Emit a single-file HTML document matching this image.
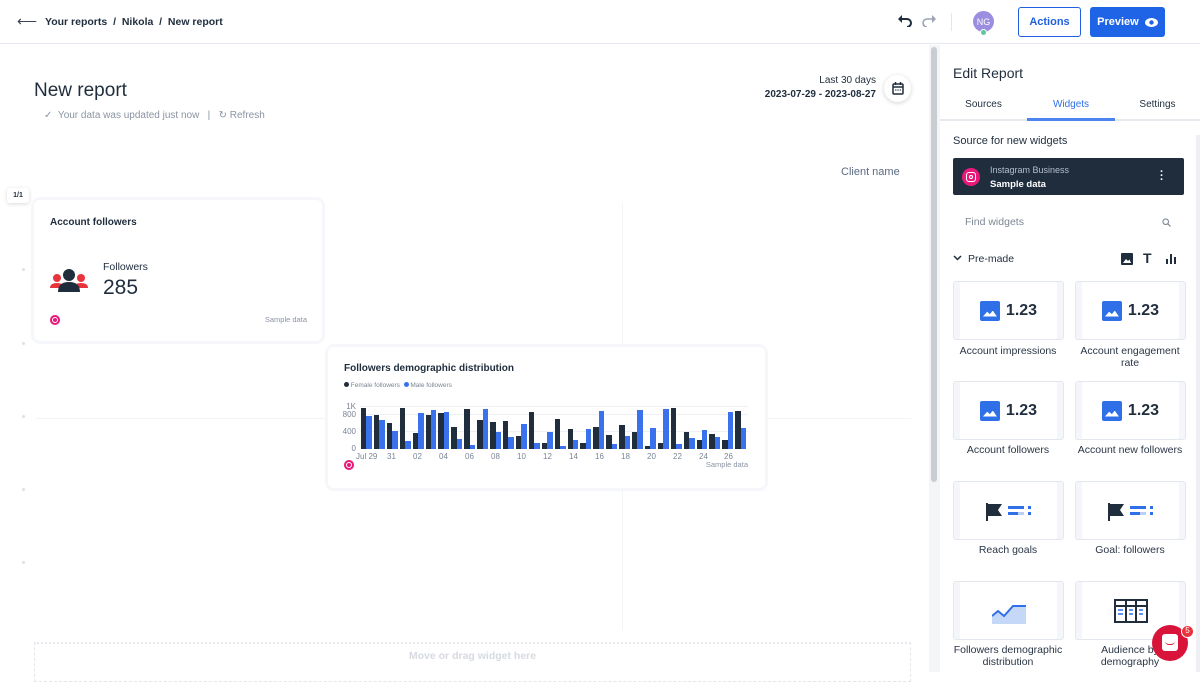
<!DOCTYPE html>
<html><head><meta charset="utf-8"><style>
*{box-sizing:border-box;margin:0;padding:0}
body{width:1200px;height:672px;overflow:hidden;font-family:"Liberation Sans",sans-serif;color:#1f2d3d;background:#fff;position:relative}
.abs{position:absolute}
.hdr{left:0;top:0;width:1200px;height:44px;border-bottom:1px solid #e6e9ef;background:#fff}
.crumb{left:45px;top:16px;font-size:10.5px;font-weight:bold;color:#1f2d3d}
.btn{top:7px;height:30px;border-radius:3px;font-size:11px;font-weight:bold;display:flex;align-items:center;justify-content:center}
.card{background:#fff;border-radius:6px;box-shadow:0 0 0 3px #f6f7fa,0 1px 4px rgba(0,0,0,.05)}
.tile{position:absolute;width:111px;height:59px;border:1px solid #e3e7ee;border-radius:3px;background:#fff;box-shadow:inset 6px 0 0 #f4f6fa,inset -6px 0 0 #f4f6fa}
.lbl{position:absolute;width:122px;text-align:center;font-size:10.5px;color:#2a3646;line-height:12px}
.num{display:flex;align-items:center;justify-content:center;height:100%;gap:6px;font-weight:bold;font-size:16px;color:#1f2d3d}
.ic{width:20px;height:20px;background:#2f6fe8;border-radius:2px;position:relative;overflow:hidden}
.ic:after{content:"";position:absolute;left:3px;bottom:4px;width:14px;height:6px;background:#fff;clip-path:polygon(0 100%,30% 20%,50% 60%,70% 0,100% 100%)}
.bars{left:361px;top:406px;width:387px;height:43px;display:flex;align-items:flex-end}
.g{flex:1;display:flex;align-items:flex-end;gap:0;height:100%;padding-right:2px}
.g i{display:block;flex:1}
.f{background:#1f2d3d}.m{background:#3a72ee}
.ax{font-size:8px;color:#7a8594}
</style></head><body>
<div class="abs hdr"></div>
<div class="abs" style="left:17px;top:13px;font-size:14px;color:#3a4656">⟵</div>
<div class="abs crumb">Your reports &nbsp;/ &nbsp;Nikola &nbsp;/ &nbsp;New report</div>
<svg class="abs" style="left:898px;top:15px" width="14" height="12" viewBox="0 0 14 12"><path d="M2 4h7a4 4 0 0 1 0 8" fill="none" stroke="#1f2d3d" stroke-width="2"/><path d="M0 4l4-4v8z" fill="#1f2d3d"/></svg>
<svg class="abs" style="left:922px;top:15px" width="14" height="12" viewBox="0 0 14 12"><path d="M12 4H5a4 4 0 0 0 0 8" fill="none" stroke="#9aa3af" stroke-width="1.6"/><path d="M14 4l-4-4v8z" fill="#9aa3af"/></svg>
<div class="abs" style="left:951px;top:13px;width:1px;height:18px;background:#e3e6eb"></div>
<div class="abs" style="left:973px;top:11px;width:21px;height:21px;border-radius:50%;background:#9b8ee0;color:#fff;font-size:9px;display:flex;align-items:center;justify-content:center">NG</div>
<div class="abs" style="left:980px;top:29px;width:7px;height:7px;border-radius:50%;background:#5fc79a;border:1px solid #fff"></div>
<div class="abs btn" style="left:1018px;width:63px;border:1.5px solid #1f5fe0;color:#1f5fe0">Actions</div>
<div class="abs btn" style="left:1090px;width:75px;background:#1f63e6;color:#fff">Preview&nbsp;&nbsp;<svg width="13" height="9" viewBox="0 0 13 9"><ellipse cx="6.5" cy="4.5" rx="6.5" ry="4.5" fill="#fff"/><circle cx="6.5" cy="4.5" r="2.2" fill="#1f63e6"/></svg></div>

<div class="abs" style="left:34px;top:80px;font-size:19px;color:#1f2d3d">New report</div>
<div class="abs" style="left:44px;top:110px;font-size:10px;color:#8a94a3">✓ &nbsp;Your data was updated just now &nbsp;&nbsp;| &nbsp;&nbsp;↻ Refresh</div>
<div class="abs" style="left:760px;top:75px;width:116px;text-align:right;font-size:10px;color:#1f2d3d">Last 30 days</div>
<div class="abs" style="left:740px;top:89px;width:136px;text-align:right;font-size:10px;font-weight:bold;color:#1f2d3d">2023-07-29 - 2023-08-27</div>
<div class="abs" style="left:884px;top:75px;width:27px;height:27px;border-radius:50%;background:#fff;box-shadow:0 1px 5px rgba(0,0,0,.18)"></div>
<svg class="abs" style="left:892px;top:82px" width="12" height="13" viewBox="0 0 12 13"><rect x="1" y="2" width="10" height="10" rx="1" fill="none" stroke="#1f2d3d" stroke-width="1.5"/><path d="M1 5h10M3.5 0v3M8.5 0v3" stroke="#1f2d3d" stroke-width="1.5"/><path d="M3 8h1.5M5.3 8h1.5M7.6 8h1.5" stroke="#1f2d3d"/></svg>
<div class="abs" style="left:841px;top:166px;font-size:11px;color:#5a6a82">Client name</div>
<div class="abs" style="left:622px;top:203px;width:1px;height:427px;background:#f3f4f7"></div>
<div class="abs" style="left:36px;top:418px;width:875px;height:1px;background:#f3f4f7"></div>
<div class="abs" style="left:7px;top:188px;width:22px;height:15px;background:#fff;border-radius:3px;box-shadow:0 1px 4px rgba(0,0,0,.15);font-size:7px;font-weight:bold;text-align:center;line-height:15px">1/1</div>
<div class="abs" style="left:22px;top:268px;width:3px;height:3px;border-radius:50%;background:#dde1e7"></div>
<div class="abs" style="left:22px;top:342px;width:3px;height:3px;border-radius:50%;background:#dde1e7"></div>
<div class="abs" style="left:22px;top:415px;width:3px;height:3px;border-radius:50%;background:#dde1e7"></div>
<div class="abs" style="left:22px;top:488px;width:3px;height:3px;border-radius:50%;background:#dde1e7"></div>
<div class="abs" style="left:22px;top:561px;width:3px;height:3px;border-radius:50%;background:#dde1e7"></div>

<div class="abs card" style="left:34px;top:200px;width:288px;height:141px"></div>
<div class="abs" style="left:50px;top:217px;font-size:10px;font-weight:bold">Account followers</div>
<svg class="abs" style="left:50px;top:268px" width="38" height="24" viewBox="0 0 38 24"><circle cx="7" cy="10" r="4" fill="#e8343c"/><circle cx="31" cy="10" r="4" fill="#e8343c"/><path d="M0 20q0-5 7-5t7 5zM24 20q0-5 7-5t7 5z" fill="#e8343c"/><circle cx="19" cy="7" r="6" fill="#1f2d3d"/><path d="M8 24q0-10 11-10t11 10z" fill="#1f2d3d"/></svg>
<div class="abs" style="left:103px;top:261px;font-size:10.5px">Followers</div>
<div class="abs" style="left:103px;top:276px;font-size:21px">285</div>
<div class="abs" style="left:50px;top:315px;width:10px;height:10px;border-radius:50%;background:#e8197a;box-shadow:inset 0 0 0 2px #e8197a,inset 0 0 0 3px #fff"></div>
<div class="abs" style="left:260px;top:315px;font-size:7.5px;color:#8a94a3;width:47px;text-align:right">Sample data</div>

<div class="abs card" style="left:328px;top:347px;width:437px;height:141px"></div>
<div class="abs" style="left:344px;top:363px;font-size:10px;font-weight:bold">Followers demographic distribution</div>
<div class="abs" style="left:344px;top:382px;font-size:6.5px;color:#7a8594"><span style="display:inline-block;width:5px;height:5px;border-radius:50%;background:#1f2d3d"></span> Female followers &nbsp;<span style="display:inline-block;width:5px;height:5px;border-radius:50%;background:#3a72ee"></span> Male followers</div>
<div class="abs ax" style="left:340px;top:402px;width:16px;text-align:right">1K</div>
<div class="abs ax" style="left:340px;top:410px;width:16px;text-align:right">800</div>
<div class="abs ax" style="left:340px;top:427px;width:16px;text-align:right">400</div>
<div class="abs ax" style="left:340px;top:444px;width:16px;text-align:right">0</div>
<div class="abs" style="left:360px;top:406px;width:388px;height:1px;background:#eef0f3"></div>
<div class="abs" style="left:360px;top:414px;width:388px;height:1px;background:#eef0f3"></div>
<div class="abs" style="left:360px;top:431px;width:388px;height:1px;background:#eef0f3"></div>
<div class="abs bars">
<div class="g"><i class="f" style="height:95%"></i><i class="m" style="height:76%"></i></div>
<div class="g"><i class="f" style="height:80%"></i><i class="m" style="height:68%"></i></div>
<div class="g"><i class="f" style="height:60%"></i><i class="m" style="height:43%"></i></div>
<div class="g"><i class="f" style="height:95%"></i><i class="m" style="height:18%"></i></div>
<div class="g"><i class="f" style="height:38%"></i><i class="m" style="height:83%"></i></div>
<div class="g"><i class="f" style="height:79%"></i><i class="m" style="height:90%"></i></div>
<div class="g"><i class="f" style="height:83%"></i><i class="m" style="height:86%"></i></div>
<div class="g"><i class="f" style="height:51%"></i><i class="m" style="height:23%"></i></div>
<div class="g"><i class="f" style="height:94%"></i><i class="m" style="height:10%"></i></div>
<div class="g"><i class="f" style="height:68%"></i><i class="m" style="height:92%"></i></div>
<div class="g"><i class="f" style="height:62%"></i><i class="m" style="height:40%"></i></div>
<div class="g"><i class="f" style="height:64%"></i><i class="m" style="height:27%"></i></div>
<div class="g"><i class="f" style="height:30%"></i><i class="m" style="height:59%"></i></div>
<div class="g"><i class="f" style="height:85%"></i><i class="m" style="height:14%"></i></div>
<div class="g"><i class="f" style="height:14%"></i><i class="m" style="height:40%"></i></div>
<div class="g"><i class="f" style="height:70%"></i><i class="m" style="height:8%"></i></div>
<div class="g"><i class="f" style="height:47%"></i><i class="m" style="height:21%"></i></div>
<div class="g"><i class="f" style="height:14%"></i><i class="m" style="height:46%"></i></div>
<div class="g"><i class="f" style="height:51%"></i><i class="m" style="height:88%"></i></div>
<div class="g"><i class="f" style="height:32%"></i><i class="m" style="height:11%"></i></div>
<div class="g"><i class="f" style="height:56%"></i><i class="m" style="height:30%"></i></div>
<div class="g"><i class="f" style="height:40%"></i><i class="m" style="height:90%"></i></div>
<div class="g"><i class="f" style="height:8%"></i><i class="m" style="height:50%"></i></div>
<div class="g"><i class="f" style="height:13%"></i><i class="m" style="height:92%"></i></div>
<div class="g"><i class="f" style="height:95%"></i><i class="m" style="height:11%"></i></div>
<div class="g"><i class="f" style="height:40%"></i><i class="m" style="height:26%"></i></div>
<div class="g"><i class="f" style="height:21%"></i><i class="m" style="height:44%"></i></div>
<div class="g"><i class="f" style="height:34%"></i><i class="m" style="height:28%"></i></div>
<div class="g"><i class="f" style="height:21%"></i><i class="m" style="height:87%"></i></div>
<div class="g"><i class="f" style="height:88%"></i><i class="m" style="height:48%"></i></div>
</div>
<div class="abs ax" style="left:356px;top:452px">Jul 29</div>
<div class="abs ax" style="left:387px;top:452px">31</div>
<div class="abs ax" style="left:413px;top:452px">02</div>
<div class="abs ax" style="left:439px;top:452px">04</div>
<div class="abs ax" style="left:465px;top:452px">06</div>
<div class="abs ax" style="left:491px;top:452px">08</div>
<div class="abs ax" style="left:517px;top:452px">10</div>
<div class="abs ax" style="left:543px;top:452px">12</div>
<div class="abs ax" style="left:569px;top:452px">14</div>
<div class="abs ax" style="left:595px;top:452px">16</div>
<div class="abs ax" style="left:621px;top:452px">18</div>
<div class="abs ax" style="left:647px;top:452px">20</div>
<div class="abs ax" style="left:673px;top:452px">22</div>
<div class="abs ax" style="left:699px;top:452px">24</div>
<div class="abs ax" style="left:724px;top:452px">26</div>
<div class="abs" style="left:344px;top:460px;width:10px;height:10px;border-radius:50%;background:#e8197a;box-shadow:inset 0 0 0 2px #e8197a,inset 0 0 0 3px #fff"></div>
<div class="abs" style="left:700px;top:460px;font-size:7.5px;color:#8a94a3;width:48px;text-align:right">Sample data</div>

<div class="abs" style="left:34px;top:642px;width:877px;height:40px;border:1px dashed #e3e6eb;border-top:2px dotted #e6e8ed"></div>
<div class="abs" style="left:34px;top:650px;width:877px;text-align:center;font-size:10.5px;font-weight:bold;color:#d6dae0">Move or drag widget here</div>

<div class="abs" style="left:929px;top:45px;width:11px;height:627px;background:#f4f5f7"></div>
<div class="abs" style="left:931px;top:47px;width:6px;height:435px;border-radius:3px;background:#c9cdd3"></div>

<div class="abs" style="left:953px;top:65px;font-size:14px;color:#1f2d3d">Edit Report</div>
<div class="abs" style="left:940px;top:99px;width:87px;text-align:center;font-size:10px;color:#1f2d3d">Sources</div>
<div class="abs" style="left:1027px;top:99px;width:88px;text-align:center;font-size:10px;color:#2f6fe8">Widgets</div>
<div class="abs" style="left:1115px;top:99px;width:85px;text-align:center;font-size:10px;color:#1f2d3d">Settings</div>
<div class="abs" style="left:940px;top:119px;width:260px;height:2px;background:#e6e9ee"></div>
<div class="abs" style="left:1027px;top:118px;width:88px;height:3px;background:#4d83ee"></div>
<div class="abs" style="left:1196px;top:135px;width:4px;height:537px;background:#eef0f3"></div>
<div class="abs" style="left:953px;top:135px;font-size:11px;color:#1f2d3d">Source for new widgets</div>
<div class="abs" style="left:953px;top:158px;width:231px;height:37px;background:#1f2d3d;border-radius:2px"></div>
<div class="abs" style="left:962px;top:168px;width:18px;height:18px;border-radius:50%;background:#e8197a"></div>
<div class="abs" style="left:966px;top:172px;width:10px;height:10px;border:1.3px solid #fff;border-radius:3px"></div>
<div class="abs" style="left:969px;top:175px;width:4px;height:4px;border:1.2px solid #fff;border-radius:50%"></div>
<div class="abs" style="left:990px;top:165px;font-size:9px;color:#b6bfcc">Instagram Business</div>
<div class="abs" style="left:990px;top:179px;font-size:9.5px;color:#fff;font-weight:bold">Sample data</div>
<div class="abs" style="left:1160px;top:170px;color:#fff;font-size:11px;font-weight:bold;line-height:4px">·<br>·<br>·</div>
<div class="abs" style="left:965px;top:216px;font-size:10.5px;color:#7d8795">Find widgets</div>
<svg class="abs" style="left:1162px;top:218px" width="9" height="9" viewBox="0 0 9 9"><circle cx="3.7" cy="3.7" r="2.8" fill="none" stroke="#7d8795" stroke-width="1.1"/><path d="M5.8 5.8L8.5 8.5" stroke="#7d8795" stroke-width="1.2"/></svg>
<svg class="abs" style="left:953px;top:255px" width="9" height="6" viewBox="0 0 9 6"><path d="M1 1l3.5 3.5L8 1" fill="none" stroke="#1f2d3d" stroke-width="1.5"/></svg>
<div class="abs" style="left:968px;top:253px;font-size:10.5px;color:#1f2d3d">Pre-made</div>
<svg class="abs" style="left:1121px;top:253px" width="12" height="12" viewBox="0 0 12 12"><rect width="12" height="12" rx="1" fill="#1f2d3d"/><path d="M2 10l3-4 2 2 1.5-1.5L10 10z" fill="#fff"/></svg>
<div class="abs" style="left:1143px;top:250px;font-size:14px;font-weight:bold">T</div>
<svg class="abs" style="left:1166px;top:253px" width="11" height="11" viewBox="0 0 11 11"><path d="M1 11V6M5 11V1M9 11V4" stroke="#1f2d3d" stroke-width="2"/></svg>

<div class="tile" style="left:953px;top:281px"><div class="num"><div class="ic"></div>1.23</div></div>
<div class="tile" style="left:1075px;top:281px"><div class="num"><div class="ic"></div>1.23</div></div>
<div class="lbl" style="left:947px;top:345px">Account impressions</div>
<div class="lbl" style="left:1075px;top:345px;width:110px">Account engagement rate</div>
<div class="tile" style="left:953px;top:381px"><div class="num"><div class="ic"></div>1.23</div></div>
<div class="tile" style="left:1075px;top:381px"><div class="num"><div class="ic"></div>1.23</div></div>
<div class="lbl" style="left:947px;top:444px">Account followers</div>
<div class="lbl" style="left:1069px;top:444px">Account new followers</div>
<div class="tile" style="left:953px;top:481px"><svg style="position:absolute;left:32px;top:21px" width="50" height="18" viewBox="0 0 50 18"><path d="M1 0v18" stroke="#1f2d3d" stroke-width="2"/><path d="M2 1h14l-4 6 4 6H2z" fill="#1f2d3d"/><rect x="22" y="3" width="16" height="3" fill="#2f6fe8"/><rect x="22" y="9" width="10" height="3" fill="#2f6fe8"/><rect x="32" y="9" width="6" height="3" fill="#bcd0f7"/><rect x="42" y="3" width="3" height="3" fill="#2f6fe8"/><rect x="42" y="9" width="3" height="3" fill="#2f6fe8"/></svg></div>
<div class="tile" style="left:1075px;top:481px"><svg style="position:absolute;left:32px;top:21px" width="50" height="18" viewBox="0 0 50 18"><path d="M1 0v18" stroke="#1f2d3d" stroke-width="2"/><path d="M2 1h14l-4 6 4 6H2z" fill="#1f2d3d"/><rect x="22" y="3" width="16" height="3" fill="#2f6fe8"/><rect x="22" y="9" width="10" height="3" fill="#2f6fe8"/><rect x="32" y="9" width="6" height="3" fill="#bcd0f7"/><rect x="42" y="3" width="3" height="3" fill="#2f6fe8"/><rect x="42" y="9" width="3" height="3" fill="#2f6fe8"/></svg></div>
<div class="lbl" style="left:947px;top:544px">Reach goals</div>
<div class="lbl" style="left:1069px;top:544px">Goal: followers</div>
<div class="tile" style="left:953px;top:581px"><svg style="position:absolute;left:38px;top:20px" width="34" height="22" viewBox="0 0 34 22"><path d="M0 14l6-5 6 5 9-10h13v18H0z" fill="#c6d8f8"/><path d="M0 14l6-5 6 5 9-10h13" fill="none" stroke="#2f6fe8" stroke-width="2"/></svg></div>
<div class="tile" style="left:1075px;top:581px"><svg style="position:absolute;left:38px;top:17px" width="34" height="24" viewBox="0 0 34 24"><rect x="1" y="1" width="32" height="22" fill="none" stroke="#1f2d3d" stroke-width="2"/><path d="M1 7h32M12 1v22M22 1v22" stroke="#1f2d3d" stroke-width="2"/><path d="M4 11h5M4 15h5M15 11h4M15 15h4M25 11h4M25 15h4" stroke="#2f6fe8" stroke-width="1.5"/></svg></div>
<div class="lbl" style="left:947px;top:644px">Followers demographic distribution</div>
<div class="lbl" style="left:1080px;top:644px;width:100px">Audience by demography</div>

<div class="abs" style="left:1152px;top:625px;width:36px;height:36px;border-radius:50%;background:#d8143a"></div>
<div class="abs" style="left:1162px;top:634px;width:16px;height:17px;border-radius:3px;background:#fff"></div>
<div class="abs" style="left:1165px;top:641px;width:10px;height:4px;border-bottom:1.5px solid #d8143a;border-radius:0 0 5px 5px"></div>
<div class="abs" style="left:1181px;top:625px;width:13px;height:13px;border-radius:50%;background:#e8343c;border:1.5px solid #fff;color:#fff;font-size:8px;text-align:center;line-height:10px">5</div>
</body></html>
